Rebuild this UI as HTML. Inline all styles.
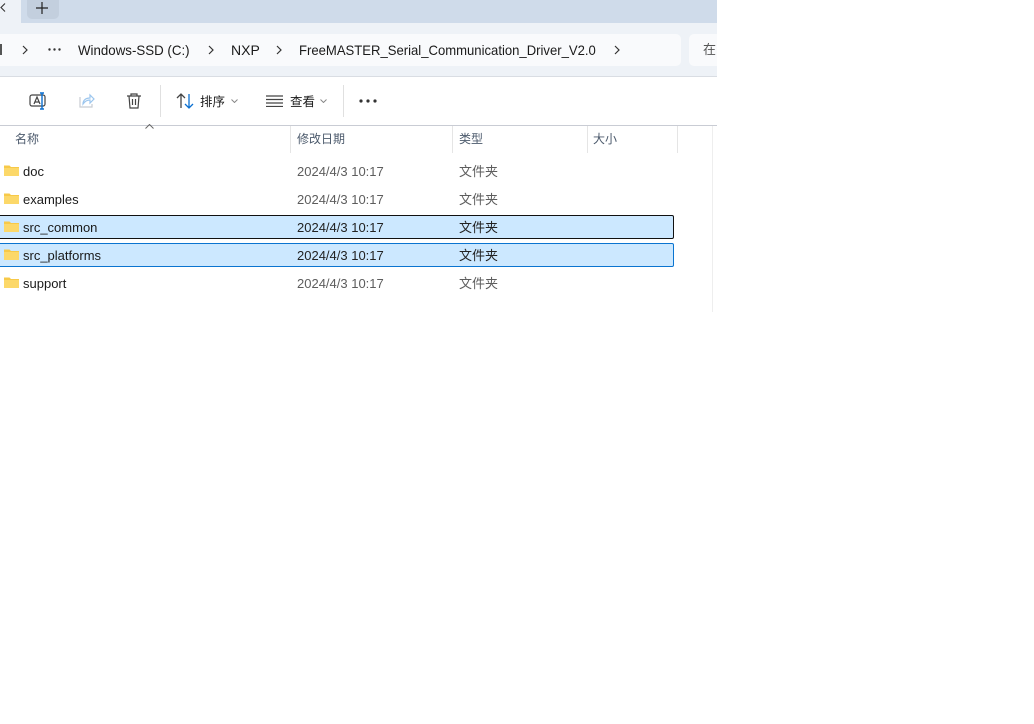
<!DOCTYPE html>
<html><head><meta charset="utf-8"><style>
*{margin:0;padding:0;box-sizing:border-box}
body{width:1034px;height:724px;background:#fff;position:relative;overflow:hidden;font-family:"Liberation Sans","Noto Sans CJK SC",sans-serif;color:#1a1a1a}
.abs{position:absolute}
.t{position:absolute;white-space:nowrap;line-height:16px}
.cj{font-family:"Noto Sans CJK SC",sans-serif}
.row .t{font-size:13px}
.d{font-size:12px;color:#5d5d5d}
.k{font-size:12px;color:#5d5d5d;font-family:"Noto Sans CJK SC",sans-serif;top:0}
</style></head><body>
<!-- title bar -->
<div class="abs" style="left:0;top:0;width:717px;height:23px;background:#cfdbea"></div>
<div class="abs" style="left:0;top:0;width:21px;height:23px;background:#eef2f7"></div>
<div class="abs" style="left:27px;top:0;width:32px;height:19px;background:#c3cfde;border-radius:0 0 5px 5px"></div>
<svg class="abs" style="left:36px;top:2px" width="12" height="12" viewBox="0 0 12 12" stroke="#222" stroke-width="1.2"><path d="M6 0v12M0 6h12"/></svg>
<svg class="abs" style="left:0;top:3px" width="6" height="9" viewBox="0 0 6 9" fill="none" stroke="#333" stroke-width="1.1"><path d="M5 0.5L1 4.5l4 4"/></svg>
<!-- address area -->
<div class="abs" style="left:0;top:23px;width:717px;height:54px;background:#eef2f7;border-bottom:1px solid #d9dde3"></div>
<div class="abs" style="left:0;top:34px;width:681px;height:32px;background:#f9fafc;border-radius:0 5px 5px 0"></div>
<div class="abs" style="left:689px;top:34px;width:28px;height:32px;background:#f9fafc;border-radius:5px 0 0 5px"></div>
<div class="abs" style="left:0;top:44px;width:2px;height:11px;background:#555"></div>
<svg class="abs" style="left:22px;top:45px" width="6" height="10" viewBox="0 0 6 10" fill="none" stroke="#333" stroke-width="1.2"><path d="M1 1l4 4-4 4"/></svg>
<svg class="abs" style="left:48px;top:48px" width="14" height="3"><circle cx="1.5" cy="1.5" r="1.2" fill="#333"/><circle cx="6.5" cy="1.5" r="1.2" fill="#333"/><circle cx="11.5" cy="1.5" r="1.2" fill="#333"/></svg>
<div class="t" style="left:78px;top:42px;font-size:14px;transform:scaleX(0.95);transform-origin:left">Windows-SSD (C:)</div>
<svg class="abs" style="left:208px;top:45px" width="6" height="10" viewBox="0 0 6 10" fill="none" stroke="#333" stroke-width="1.2"><path d="M1 1l4 4-4 4"/></svg>
<div class="t" style="left:231px;top:42px;font-size:14px">NXP</div>
<svg class="abs" style="left:276px;top:45px" width="6" height="10" viewBox="0 0 6 10" fill="none" stroke="#333" stroke-width="1.2"><path d="M1 1l4 4-4 4"/></svg>
<div class="t" style="left:299px;top:42px;font-size:14px;transform:scaleX(0.935);transform-origin:left">FreeMASTER_Serial_Communication_Driver_V2.0</div>
<svg class="abs" style="left:614px;top:45px" width="6" height="10" viewBox="0 0 6 10" fill="none" stroke="#333" stroke-width="1.2"><path d="M1 1l4 4-4 4"/></svg>
<div class="t cj" style="left:703px;top:41px;font-size:13px;color:#555">在</div>
<!-- toolbar -->
<svg class="abs" style="left:28px;top:91px" width="20" height="20" viewBox="0 0 20 20" fill="none">
<rect x="2" y="4" width="15" height="11" rx="2" stroke="#444" stroke-width="1.2"/>
<path d="M6 13l3-7 3 7M7 11h4" stroke="#444" stroke-width="1.2"/>
<path d="M14 2v16M12 2h4M12 18h4" stroke="#0a6fd0" stroke-width="1.4"/></svg>
<svg class="abs" style="left:77px;top:91px" width="20" height="20" viewBox="0 0 20 20" fill="none">
<path d="M3 6v10h12v-3" stroke="#c8ccd2" stroke-width="1.2"/>
<path d="M6 13c0-4 3-6 7-6V4l4 4-4 4V9c-3 0-5 1-7 4z" stroke="#9cc6ee" stroke-width="1.2"/></svg>
<svg class="abs" style="left:125px;top:91px" width="18" height="20" viewBox="0 0 18 20" fill="none" stroke="#444" stroke-width="1.2">
<path d="M2 5h14M6 5V3h6v2M4 5l1 12h8l1-12M7.5 8v6M10.5 8v6"/></svg>
<div class="abs" style="left:160px;top:85px;width:1px;height:32px;background:#e0e0e0"></div>
<svg class="abs" style="left:176px;top:92px" width="18" height="18" viewBox="0 0 18 18" fill="none" stroke-width="1.3">
<path d="M5 16V2M1 6l4-4 4 4" stroke="#444"/><path d="M13 2v14M9 12l4 4 4-4" stroke="#0a6fd0"/></svg>
<div class="t cj" style="left:200px;top:93px;font-size:12.5px">排序</div>
<svg class="abs" style="left:231px;top:99px" width="7" height="4" viewBox="0 0 7 4" fill="none" stroke="#888"><path d="M0.5 0.5l3 3 3-3"/></svg>
<svg class="abs" style="left:266px;top:95px" width="17" height="12" viewBox="0 0 17 12" stroke="#444" stroke-width="1.2"><path d="M0 1h17M0 4.5h17M0 8h17M0 11.5h17"/></svg>
<div class="t cj" style="left:290px;top:93px;font-size:12.5px">查看</div>
<svg class="abs" style="left:320px;top:99px" width="7" height="4" viewBox="0 0 7 4" fill="none" stroke="#888"><path d="M0.5 0.5l3 3 3-3"/></svg>
<div class="abs" style="left:343px;top:85px;width:1px;height:32px;background:#e0e0e0"></div>
<svg class="abs" style="left:359px;top:99px" width="18" height="4"><circle cx="2" cy="2" r="1.6" fill="#333"/><circle cx="9" cy="2" r="1.6" fill="#333"/><circle cx="16" cy="2" r="1.6" fill="#333"/></svg>
<!-- header -->
<div class="abs" style="left:0;top:125px;width:717px;height:1px;background:#c9ccd4"></div>
<svg class="abs" style="left:145px;top:124px" width="9" height="5" viewBox="0 0 9 5" fill="none" stroke="#666"><path d="M0.5 4.5l4-4 4 4"/></svg>
<div class="t cj" style="left:15px;top:131px;font-size:12px;color:#4c5a6c">名称</div>
<div class="abs" style="left:290px;top:126px;width:1px;height:27px;background:#e5e5e5"></div>
<div class="t cj" style="left:297px;top:131px;font-size:12px;color:#4c5a6c">修改日期</div>
<div class="abs" style="left:452px;top:126px;width:1px;height:27px;background:#e5e5e5"></div>
<div class="t cj" style="left:459px;top:131px;font-size:12px;color:#4c5a6c">类型</div>
<div class="abs" style="left:587px;top:126px;width:1px;height:27px;background:#e5e5e5"></div>
<div class="t cj" style="left:593px;top:131px;font-size:12px;color:#4c5a6c">大小</div>
<div class="abs" style="left:677px;top:126px;width:1px;height:27px;background:#e5e5e5"></div>
<div class="abs" style="left:712px;top:126px;width:1px;height:186px;background:#eeeeee"></div>
<!-- selection -->
<div class="abs" style="left:-2px;top:215px;width:676px;height:24px;background:#cce8ff;border:1px solid #111;border-radius:2px"></div>
<div class="abs" style="left:-2px;top:243px;width:676px;height:24px;background:#cce8ff;border:1px solid #0a74d0;border-radius:2px"></div>
<div class="row">
<svg class="abs" style="left:4px;top:164px" width="15" height="13" viewBox="0 0 15 13"><path d="M0 1.5h5.5l1.5 1.5H15V12H0z" fill="#f7c948"/><path d="M0 4h15v8H0z" fill="#fcd869"/></svg>
<div class="t" style="left:23px;top:164px">doc</div><div class="t d" style="left:297px;top:164px">2024/4/3 10:17</div><div class="t k" style="left:459px;top:163px">文件夹</div>
<svg class="abs" style="left:4px;top:192px" width="15" height="13" viewBox="0 0 15 13"><path d="M0 1.5h5.5l1.5 1.5H15V12H0z" fill="#f7c948"/><path d="M0 4h15v8H0z" fill="#fcd869"/></svg>
<div class="t" style="left:23px;top:192px">examples</div><div class="t d" style="left:297px;top:192px">2024/4/3 10:17</div><div class="t k" style="left:459px;top:191px">文件夹</div>
<svg class="abs" style="left:4px;top:220px" width="15" height="13" viewBox="0 0 15 13"><path d="M0 1.5h5.5l1.5 1.5H15V12H0z" fill="#f7c948"/><path d="M0 4h15v8H0z" fill="#fcd869"/></svg>
<div class="t" style="left:23px;top:220px">src_common</div><div class="t d" style="left:297px;top:220px;color:#222">2024/4/3 10:17</div><div class="t k" style="left:459px;top:219px;color:#222">文件夹</div>
<svg class="abs" style="left:4px;top:248px" width="15" height="13" viewBox="0 0 15 13"><path d="M0 1.5h5.5l1.5 1.5H15V12H0z" fill="#f7c948"/><path d="M0 4h15v8H0z" fill="#fcd869"/></svg>
<div class="t" style="left:23px;top:248px">src_platforms</div><div class="t d" style="left:297px;top:248px;color:#222">2024/4/3 10:17</div><div class="t k" style="left:459px;top:247px;color:#222">文件夹</div>
<svg class="abs" style="left:4px;top:276px" width="15" height="13" viewBox="0 0 15 13"><path d="M0 1.5h5.5l1.5 1.5H15V12H0z" fill="#f7c948"/><path d="M0 4h15v8H0z" fill="#fcd869"/></svg>
<div class="t" style="left:23px;top:276px">support</div><div class="t d" style="left:297px;top:276px">2024/4/3 10:17</div><div class="t k" style="left:459px;top:275px">文件夹</div>
</div>
</body></html>
